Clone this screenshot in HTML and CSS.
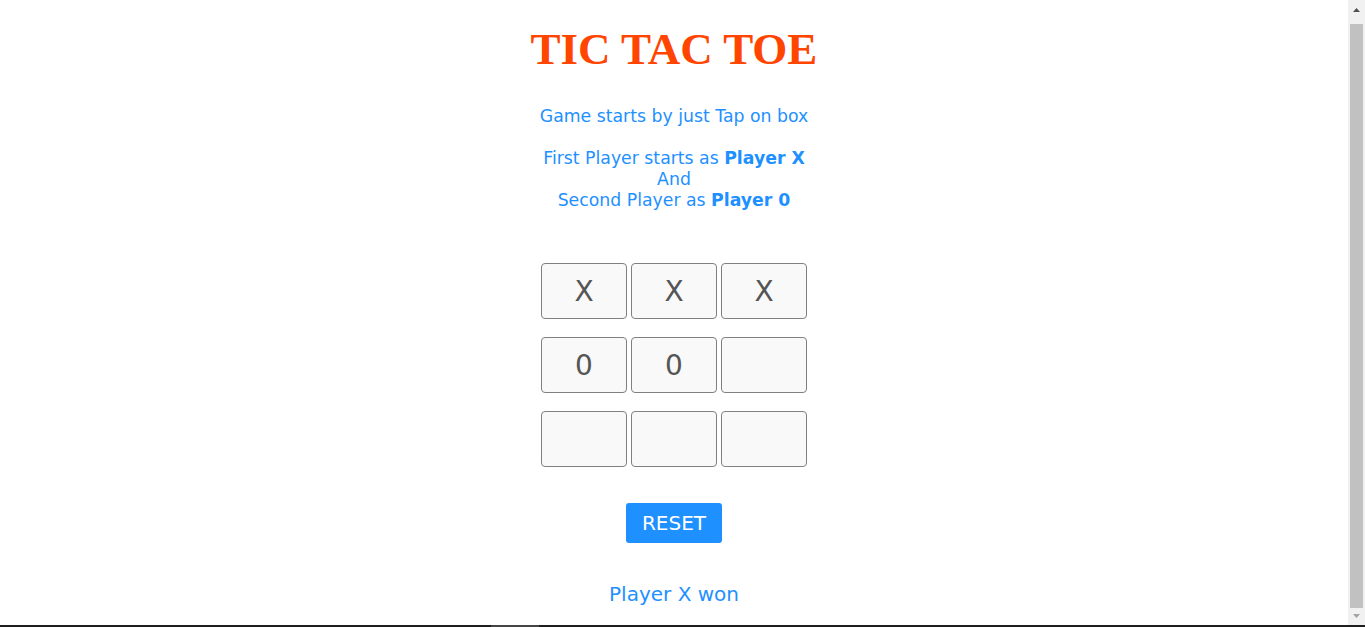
FILE: index.html
```html
<!DOCTYPE html>
<html lang="en">
<head>
<meta charset="utf-8">
<title>Tic Tac Toe</title>
<link rel="stylesheet" href="styles.css">
</head>
<body>
<div class="window">
  <main class="game">
    <h1 class="title">TIC TAC TOE</h1>
    <p class="intro">Game starts by just Tap on box</p>
    <p class="rules">First Player starts as <b>Player X</b><br>And<br>Second Player as <b>Player 0</b></p>
    <div class="board">
      <button class="cell">X</button>
      <button class="cell">X</button>
      <button class="cell">X</button>
      <button class="cell">0</button>
      <button class="cell">0</button>
      <button class="cell"></button>
      <button class="cell"></button>
      <button class="cell"></button>
      <button class="cell"></button>
    </div>
    <button class="reset">RESET</button>
    <p class="status">Player X won</p>
  </main>
  <aside class="rail" aria-hidden="true">
    <svg class="rail-arrow" width="7" height="4" viewBox="0 0 7 4"><polygon points="3.5,0 7,4 0,4" fill="#505050"/></svg>
    <div class="rail-thumb"></div>
    <svg class="rail-arrow rail-arrow-down" width="7" height="4" viewBox="0 0 7 4"><polygon points="0,0 7,0 3.5,4" fill="#a3a3a3"/></svg>
  </aside>
</div>
<div class="edge"><span class="edge-mark"></span></div>
</body>
</html>
```
FILE: styles.css
```css
html, body {
  margin: 0;
  padding: 0;
  background: #ffffff;
}

body {
  font-family: "DejaVu Sans", Verdana, sans-serif;
  height: 100vh;
  display: flex;
  flex-direction: column;
  overflow: hidden;
}

.window {
  flex: 1;
  display: flex;
  min-height: 0;
}

.game {
  flex: 1;
  display: flex;
  flex-direction: column;
  align-items: center;
}

/* vertical scroll rail on the right */
.rail {
  width: 17px;
  background: #f1f1f1;
  display: flex;
  flex-direction: column;
  align-items: center;
}

.rail-arrow {
  display: block;
  margin-top: 8px;
}

.rail-thumb {
  flex: 1;
  width: 13px;
  margin-top: 12px;
  background: #c1c1c1;
}

.rail-arrow-down {
  margin-top: 6px;
  margin-bottom: 7px;
}

/* dark strip along the bottom edge */
.edge {
  height: 2px;
  background: #1e1e1e;
  padding-left: 491px;
}

.edge-mark {
  display: block;
  width: 48px;
  height: 2px;
  background: #454545;
}

.title {
  margin: 23px 0 0;
  font-family: "Liberation Serif", "Times New Roman", serif;
  font-weight: bold;
  font-size: 45px;
  line-height: 52px;
  color: #ff4500;
}

.intro,
.rules {
  margin: 0;
  color: #1e90ff;
  font-size: 17.3px;
  line-height: 21px;
  text-align: center;
}

.intro {
  margin-top: 31px;
}

.rules {
  margin-top: 21px;
}

.board {
  display: grid;
  grid-template-columns: repeat(3, 86px);
  grid-auto-rows: 56px;
  column-gap: 4px;
  row-gap: 18px;
  margin-top: 52px;
}

.cell {
  box-sizing: border-box;
  border: 1px solid #808080;
  border-radius: 4px;
  background: #f9f9f9;
  color: #555555;
  font-family: "DejaVu Sans", Verdana, sans-serif;
  font-size: 28px;
  padding: 0;
}

.reset {
  margin-top: 36px;
  width: 96px;
  height: 40px;
  border: none;
  border-radius: 3px;
  background: #1e90ff;
  color: #ffffff;
  font-family: "DejaVu Sans", Verdana, sans-serif;
  font-size: 20px;
  padding: 0;
}

.status {
  margin: 39px 0 0;
  color: #1e90ff;
  font-size: 20px;
  line-height: 24px;
}
```
